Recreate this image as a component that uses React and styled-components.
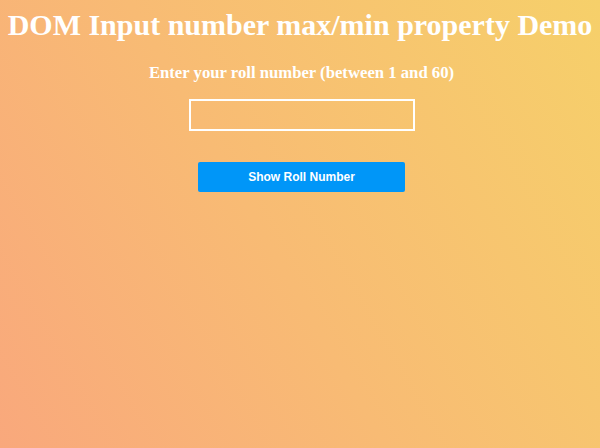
import React from "react";
import styled, { createGlobalStyle } from "styled-components";

const GlobalStyle = createGlobalStyle`
  html, body {
    margin: 0;
    height: 100%;
  }
  body {
    min-height: 448px;
    background: linear-gradient(60deg, #f9a87c 0%, #f8bb74 45%, #f6d06a 100%);
    font-family: "Liberation Serif", "Times New Roman", serif;
    color: #fff;
  }
`;

const Page = styled.main`
  display: flex;
  flex-direction: column;
  align-items: center;
  text-align: center;
  padding-left: 3px;
`;

const Title = styled.h1`
  margin: 7px 0 0 -3px;
  font-size: 30px;
  font-weight: bold;
  line-height: 36px;
  white-space: nowrap;
`;

const Prompt = styled.h4`
  margin: 20px 0 0;
  font-size: 16.7px;
  line-height: 19px;
  font-weight: bold;
`;

const NumberField = styled.input`
  box-sizing: border-box;
  width: 226px;
  height: 32px;
  margin-top: 17px;
  border: 2px solid #fff;
  background: transparent;
  outline: none;
  color: #fff;
  font-size: 16px;
  padding: 0 8px;
  appearance: textfield;
`;

const ShowButton = styled.button`
  width: 207px;
  height: 30px;
  margin-top: 31px;
  border: none;
  border-radius: 2px;
  background: #0096f8;
  color: #fff;
  font-family: "Liberation Sans", Arial, sans-serif;
  font-size: 12px;
  font-weight: bold;
  cursor: pointer;
`;

const App = () => {
  return (
    <>
      <GlobalStyle />
      <Page>
        <Title>DOM Input number max/min property Demo</Title>
        <Prompt>Enter your roll number (between 1 and 60)</Prompt>
        <NumberField type="number" min="1" max="60" />
        <ShowButton>Show Roll Number</ShowButton>
      </Page>
    </>
  );
};

export default App;
